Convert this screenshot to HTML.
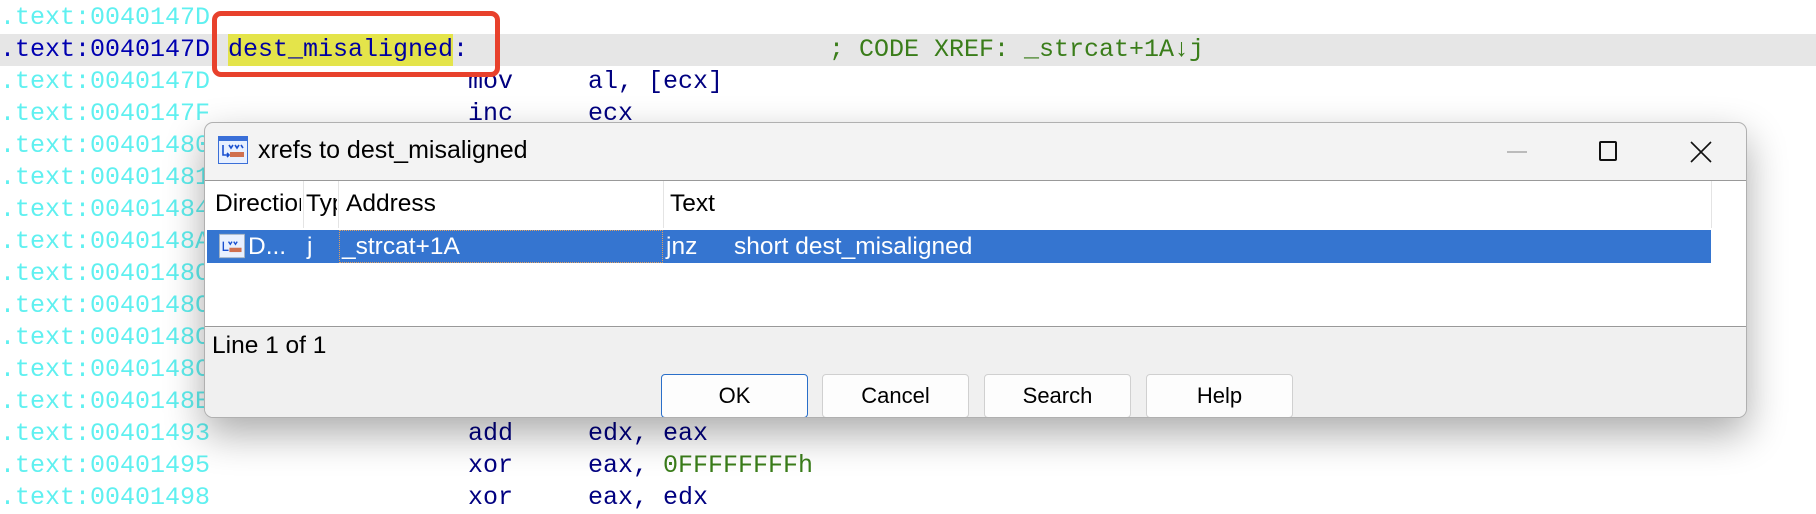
<!DOCTYPE html>
<html><head><meta charset="utf-8"><style>
*{margin:0;padding:0;box-sizing:border-box}
body{width:1816px;height:500px;background:#fff;position:relative;overflow:hidden;font-family:"Liberation Mono",monospace}
.ln{position:absolute;left:0;width:1816px;height:32px;line-height:32px;font-size:25px;white-space:pre}
.ln span{position:absolute;top:0}
.a{color:#5ff0f0}
.m{color:#000080}
.g{color:#3a7d1a}
.hl{background:#e6e6e6}
#dlg{position:absolute;left:204px;top:122px;width:1543px;height:296px;background:#f3f3f3;border:1px solid #b0b0b0;border-radius:9px;box-shadow:0 16px 40px rgba(0,0,0,.33);overflow:hidden;font-family:"Liberation Sans",sans-serif;color:#000}
#dlg div,#dlg span{position:absolute}
.t{font-size:24.5px;white-space:nowrap;line-height:30px}
.btn{top:251px;width:147px;height:44px;background:#fdfdfd;border:1px solid #d0d0d0;border-radius:4px;text-align:center;line-height:42px;font-size:22px}
</style></head><body>

<div class="ln" style="top:2px"><span class="a" style="left:0">.text:0040147D</span></div>
<div class="ln hl" style="top:34px"><span style="left:0;color:#0000b0">.text:0040147D</span><span style="left:228px;color:#0000a0;background:#e4e44a">dest_misaligned</span><span style="left:453px;color:#0000a0">:</span><span class="g" style="left:829px">; CODE XREF: _strcat+1A↓j</span></div>
<div class="ln" style="top:66px"><span class="a" style="left:0">.text:0040147D</span><span class="m" style="left:468px">mov</span><span class="m" style="left:588px">al, [ecx]</span></div>
<div class="ln" style="top:98px"><span class="a" style="left:0">.text:0040147F</span><span class="m" style="left:468px">inc</span><span class="m" style="left:588px">ecx</span></div>
<div class="ln" style="top:130px"><span class="a">.text:00401480</span></div>
<div class="ln" style="top:162px"><span class="a">.text:00401481</span></div>
<div class="ln" style="top:194px"><span class="a">.text:00401484</span></div>
<div class="ln" style="top:226px"><span class="a">.text:0040148A</span></div>
<div class="ln" style="top:258px"><span class="a">.text:0040148C</span></div>
<div class="ln" style="top:290px"><span class="a">.text:0040148C</span></div>
<div class="ln" style="top:322px"><span class="a">.text:0040148C</span></div>
<div class="ln" style="top:354px"><span class="a">.text:0040148C</span></div>
<div class="ln" style="top:386px"><span class="a">.text:0040148E</span></div>
<div class="ln" style="top:418px"><span class="a">.text:00401493</span><span class="m" style="left:468px">add</span><span class="m" style="left:588px">edx, eax</span></div>
<div class="ln" style="top:450px"><span class="a">.text:00401495</span><span class="m" style="left:468px">xor</span><span class="m" style="left:588px">eax, <b class="g" style="font-weight:normal">0FFFFFFFFh</b></span></div>
<div class="ln" style="top:482px"><span class="a">.text:00401498</span><span class="m" style="left:468px">xor</span><span class="m" style="left:588px">eax, edx</span></div>

<div style="position:absolute;left:212px;top:11px;width:288px;height:66px;border:5px solid #e8412c;border-radius:9px"></div>

<div id="dlg">
  <svg style="position:absolute;left:13px;top:13px" width="30" height="28" viewBox="0 0 30 28">
    <rect x="0.5" y="0.5" width="29" height="27" fill="#e8f0ff" stroke="#3a6fd8"/>
    <rect x="1" y="1" width="28" height="4" fill="#3a6fd8"/>
    <path d="M5 9v10h6M9 17l2 2-2 2M11 9l2 3 2-3M17 9l2 3 2-3M23 9l2 3" stroke="#1a50d0" stroke-width="1.6" fill="none"/>
    <rect x="12" y="16" width="14" height="5" fill="#d07050"/>
  </svg>
  <div class="t" style="left:53px;top:12px;font-size:25px">xrefs to dest_misaligned</div>
  <div style="left:1302px;top:28px;width:20px;height:2px;background:#bbb"></div>
  <div style="left:1394px;top:18px;width:18px;height:20px;border:2px solid #111;border-radius:2px"></div>
  <svg style="position:absolute;left:1485px;top:18px" width="22" height="22"><path d="M1 1L21 21M21 1L1 21" stroke="#111" stroke-width="1.6"/></svg>

  <div style="left:0;top:57px;width:1543px;height:147px;background:#fff;border-top:1px solid #999;border-bottom:1px solid #999"></div>
  <div style="left:1506px;top:58px;width:1px;height:47px;background:#e4e4e4"></div>
  <div style="left:98px;top:58px;width:1px;height:47px;background:#e4e4e4"></div>
  <div style="left:133px;top:58px;width:1px;height:47px;background:#e4e4e4"></div>
  <div style="left:458px;top:58px;width:1px;height:47px;background:#e4e4e4"></div>
  <div class="t" style="left:10px;top:66px;width:86px;overflow:hidden">Direction</div>
  <div class="t" style="left:101px;top:66px;width:31px;overflow:hidden">Type</div>
  <div class="t" style="left:141px;top:66px">Address</div>
  <div class="t" style="left:465px;top:66px">Text</div>

  <div style="left:2px;top:107px;width:1504px;height:33px;background:#3575d0"></div>
  <div style="left:134px;top:107px;width:324px;height:33px;border:1px dotted #e0a060"></div>
  <svg style="position:absolute;left:14px;top:110px" width="26" height="26" viewBox="0 0 30 28">
    <rect x="0.5" y="0.5" width="29" height="27" fill="#e8f0ff" stroke="#9ab"/>
    <path d="M5 9v10h6M11 9l2 3 2-3M17 9l2 3 2-3" stroke="#1a50d0" stroke-width="1.6" fill="none"/>
    <rect x="12" y="16" width="14" height="5" fill="#d07050"/>
  </svg>
  <div class="t" style="left:43px;top:109px;color:#fff">D...</div>
  <div class="t" style="left:102px;top:109px;color:#fff">j</div>
  <div class="t" style="left:137px;top:109px;color:#fff">_strcat+1A</div>
  <div class="t" style="left:461px;top:109px;color:#fff">jnz</div>
  <div class="t" style="left:529px;top:109px;color:#fff">short dest_misaligned</div>

  <div style="left:0;top:205px;width:1543px;height:92px;background:#f0f0f0"></div>
  <div class="t" style="left:7px;top:208px">Line 1 of 1</div>
  <div class="btn" style="left:456px;border:1px solid #2a6fc9">OK</div>
  <div class="btn" style="left:617px">Cancel</div>
  <div class="btn" style="left:779px">Search</div>
  <div class="btn" style="left:941px">Help</div>
</div>
</body></html>
